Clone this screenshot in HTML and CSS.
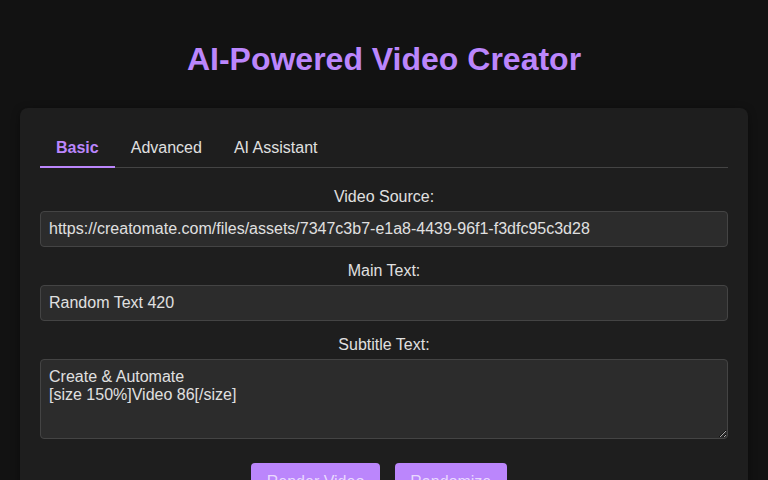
FILE: index.html
```html
<!DOCTYPE html>
<html lang="en">
<head>
    <meta charset="UTF-8">
    <meta name="viewport" content="width=device-width, initial-scale=1.0">
    <title>AI-Powered Video Creator</title>
    <link rel="stylesheet" href="styles.css">
</head>
<body>
    <div class="container">
        <h1 class="page-title">AI-Powered Video Creator</h1>
        <div class="panel">
            <div class="tabs">
                <button class="tab active">Basic</button>
                <button class="tab">Advanced</button>
                <button class="tab">AI Assistant</button>
            </div>
            <div class="form-group">
                <label for="videoSource">Video Source:</label>
                <input type="text" id="videoSource" value="https://creatomate.com/files/assets/7347c3b7-e1a8-4439-96f1-f3dfc95c3d28">
            </div>
            <div class="form-group">
                <label for="mainText">Main Text:</label>
                <input type="text" id="mainText" value="Random Text 420">
            </div>
            <div class="form-group">
                <label for="subtitleText">Subtitle Text:</label>
                <textarea id="subtitleText">Create &amp; Automate
[size 150%]Video 86[/size]</textarea>
            </div>
            <div class="actions">
                <button class="btn">Render Video</button>
                <button class="btn">Randomize</button>
            </div>
        </div>
    </div>
</body>
</html>
```

FILE: styles.css
```css
body, html {
    margin: 0;
    padding: 0;
    font-family: "Liberation Sans", Arial, sans-serif;
    background-color: #121212;
    color: #e0e0e0;
}
.container {
    padding: 0 20px;
}
.page-title {
    margin: 0;
    padding: 41px 0 30px;
    font-size: 32px;
    line-height: 37px;
    text-align: center;
    color: #bb86fc;
}
.panel {
    background-color: #1e1e1e;
    border-radius: 8px;
    padding: 20px;
    box-shadow: 0 2px 8px rgba(0, 0, 0, 0.4);
}
.tabs {
    display: flex;
    border-bottom: 1px solid #444;
    margin-bottom: 20px;
}
.tab {
    background: none;
    border: none;
    border-bottom: 2px solid transparent;
    margin-bottom: -1px;
    padding: 11px 16px 9px;
    font-family: inherit;
    font-size: 16px;
    line-height: 18px;
    color: #e0e0e0;
    cursor: pointer;
}
.tab.active {
    color: #bb86fc;
    font-weight: bold;
    border-bottom-color: #bb86fc;
}
.form-group {
    margin-bottom: 15px;
    text-align: center;
}
.form-group label {
    display: block;
    font-size: 16px;
    line-height: 18px;
    margin-bottom: 5px;
    color: #e0e0e0;
}
.form-group input,
.form-group textarea {
    display: block;
    width: 100%;
    box-sizing: border-box;
    background-color: #2c2c2c;
    border: 1px solid #444;
    border-radius: 4px;
    padding: 8px;
    font-family: inherit;
    font-size: 16px;
    line-height: 18px;
    color: #e0e0e0;
    text-align: left;
}
.form-group textarea {
    height: 80px;
    resize: vertical;
}
.actions {
    display: flex;
    justify-content: center;
    gap: 15px;
    padding: 9px 10px 0 0;
}
.btn {
    background-color: #bb86fc;
    color: rgba(255, 255, 255, 0.7);
    border: none;
    border-radius: 4px;
    padding: 10px 15.5px;
    font-family: inherit;
    font-size: 16px;
    line-height: 18px;
    cursor: pointer;
}
```
